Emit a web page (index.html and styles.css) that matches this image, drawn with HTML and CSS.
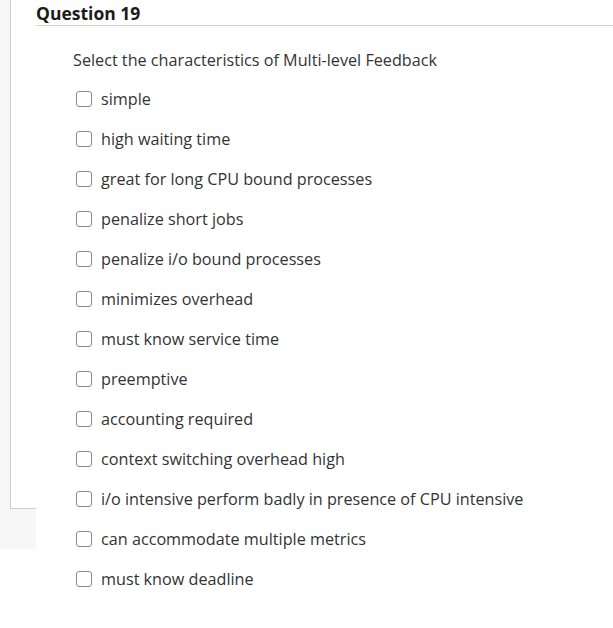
FILE: index.html
```html
<!DOCTYPE html>
<html>
<head>
<meta charset="utf-8">
<link rel="stylesheet" href="styles.css">
</head>
<body>
<div class="page">
  <div class="rail"><div class="rail-box"></div></div>
  <main class="main">
    <h2 class="title">Question 19</h2>
    <div class="body">
      <p class="prompt">Select the characteristics of Multi-level Feedback</p>
      <ul class="options">
        <li class="option"><span class="box"></span><span>simple</span></li>
        <li class="option"><span class="box"></span><span>high waiting time</span></li>
        <li class="option"><span class="box"></span><span>great for long CPU bound processes</span></li>
        <li class="option"><span class="box"></span><span>penalize short jobs</span></li>
        <li class="option"><span class="box"></span><span>penalize i/o bound processes</span></li>
        <li class="option"><span class="box"></span><span>minimizes overhead</span></li>
        <li class="option"><span class="box"></span><span>must know service time</span></li>
        <li class="option"><span class="box"></span><span>preemptive</span></li>
        <li class="option"><span class="box"></span><span>accounting required</span></li>
        <li class="option"><span class="box"></span><span>context switching overhead high</span></li>
        <li class="option"><span class="box"></span><span>i/o intensive perform badly in presence of CPU intensive</span></li>
        <li class="option"><span class="box"></span><span>can accommodate multiple metrics</span></li>
        <li class="option"><span class="box"></span><span>must know deadline</span></li>
      </ul>
    </div>
  </main>
</div>
</body>
</html>
```
FILE: styles.css
```css
html, body {
  margin: 0;
  padding: 0;
  background: #ffffff;
}
body {
  font-family: "Open Sans", "Noto Sans", sans-serif;
  color: #494c4e;
}
.page {
  display: flex;
  align-items: flex-start;
}
.rail {
  width: 36px;
  height: 549px;
  background: #f7f7f7;
  flex: none;
}
.rail-box {
  margin-left: 10px;
  height: 508px;
  background: #ffffff;
  border-left: 1px solid #cdcdcd;
  border-bottom: 1px solid #cdcdcd;
}
.main {
  flex: 1;
}
.title {
  margin: 0;
  padding-top: 2px;
  font-size: 17.5px;
  line-height: 23px;
  font-weight: 700;
  color: #1b1b1b;
  border-bottom: 1px solid #d3d3d3;
}
.body {
  padding-left: 37px;
}
.prompt {
  margin: 0;
  padding-top: 24px;
  font-size: 16.2px;
  line-height: 20px;
  color: #333;
}
.options {
  list-style: none;
  margin: 0;
  padding: 9px 0 0 0;
}
.option {
  display: flex;
  align-items: center;
  gap: 9px;
  height: 40px;
  font-size: 16.2px;
  color: #333;
}
.box {
  width: 14px;
  height: 14px;
  margin-left: 3px;
  border: 1px solid #8a8a8a;
  border-radius: 3px;
  flex: none;
}
```
